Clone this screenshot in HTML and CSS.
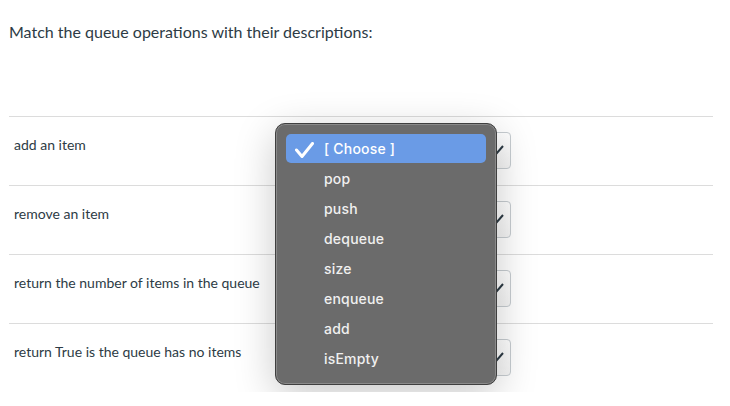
FILE: index.html
```html
<!DOCTYPE html>
<html lang="en">
<head>
  <meta charset="UTF-8">
  <title>Matching Question</title>
  <meta name="viewport" content="width=device-width, initial-scale=1">
  <link rel="stylesheet" href="styles.css">
</head>
<body>
  <div class="question">
    <p class="question-text">Match the queue operations with their descriptions:</p>

    <div class="answers">
      <div class="answer-row">
        <div class="answer-label">add an item</div>
        <div class="select-box"><svg class="chevron" viewBox="0 0 16 10"><path d="M2 1 L8 8 L14 1"/></svg></div>
      </div>
      <div class="answer-row">
        <div class="answer-label">remove an item</div>
        <div class="select-box"><svg class="chevron" viewBox="0 0 16 10"><path d="M2 1 L8 8 L14 1"/></svg></div>
      </div>
      <div class="answer-row">
        <div class="answer-label">return the number of items in the queue</div>
        <div class="select-box"><svg class="chevron" viewBox="0 0 16 10"><path d="M2 1 L8 8 L14 1"/></svg></div>
      </div>
      <div class="answer-row">
        <div class="answer-label">return True is the queue has no items</div>
        <div class="select-box"><svg class="chevron" viewBox="0 0 16 10"><path d="M2 1 L8 8 L14 1"/></svg></div>
      </div>
    </div>

    <!-- open native dropdown for the first select -->
    <ul class="popup-menu">
      <li class="menu-item selected">
        <svg class="check" viewBox="0 0 19 16"><path d="M1.5 8 L7 14.5 L17.5 1.5"/></svg>
        [ Choose ]
      </li>
      <li class="menu-item">pop</li>
      <li class="menu-item">push</li>
      <li class="menu-item">dequeue</li>
      <li class="menu-item">size</li>
      <li class="menu-item">enqueue</li>
      <li class="menu-item">add</li>
      <li class="menu-item">isEmpty</li>
    </ul>
  </div>
</body>
</html>
```

FILE: styles.css
```css
body { margin: 0; background: #fff; font-family: Lato, "Open Sans", sans-serif; color: #2d3b45; }
.question { position: relative; padding: 20px 17px 0 9px; }
.question-text { margin: 0; font-size: 16px; line-height: 24px; }

.answers { margin-top: 72px; }
.answer-row { position: relative; height: 68px; border-top: 1px solid #dcdcdc; padding-left: 5px; }
.answer-label { padding-top: 19px; font-size: 14px; line-height: 18px; }
.select-box {
  position: absolute; left: 274px; top: 15px;
  width: 226px; height: 35px;
  border: 1px solid #c7cdd1; border-radius: 4px;
  background: linear-gradient(#fff, #f5f5f5);
}
.chevron { position: absolute; right: 5px; top: 12px; width: 16px; height: 10px; fill: none; stroke: #2d3b45; stroke-width: 2; }

.popup-menu {
  position: absolute; left: 275px; top: 123px;
  box-sizing: border-box; width: 222px; height: 262px;
  margin: 0; padding: 10px 10px;
  list-style: none;
  background: #6b6b6b;
  border: 1px solid #3f3f3f; border-radius: 10px;
  box-shadow: inset 0 0 0 1px #8a8a8a, 0 10px 40px rgba(0, 0, 0, 0.22);
  font-family: Inter, "Noto Sans", sans-serif; font-size: 14px; font-weight: 500;
  color: #f0f0f0;
}
.menu-item { position: relative; height: 30px; line-height: 30px; padding-left: 38px; letter-spacing: 0.2px; }
.menu-item.selected { height: 29px; line-height: 29px; background: #6a9be6; border-radius: 5px; color: #fff; margin-bottom: 1px; }
.check { position: absolute; left: 9px; top: 8px; width: 19px; height: 16px; fill: none; stroke: #fff; stroke-width: 3; stroke-linecap: round; stroke-linejoin: round; }
```
